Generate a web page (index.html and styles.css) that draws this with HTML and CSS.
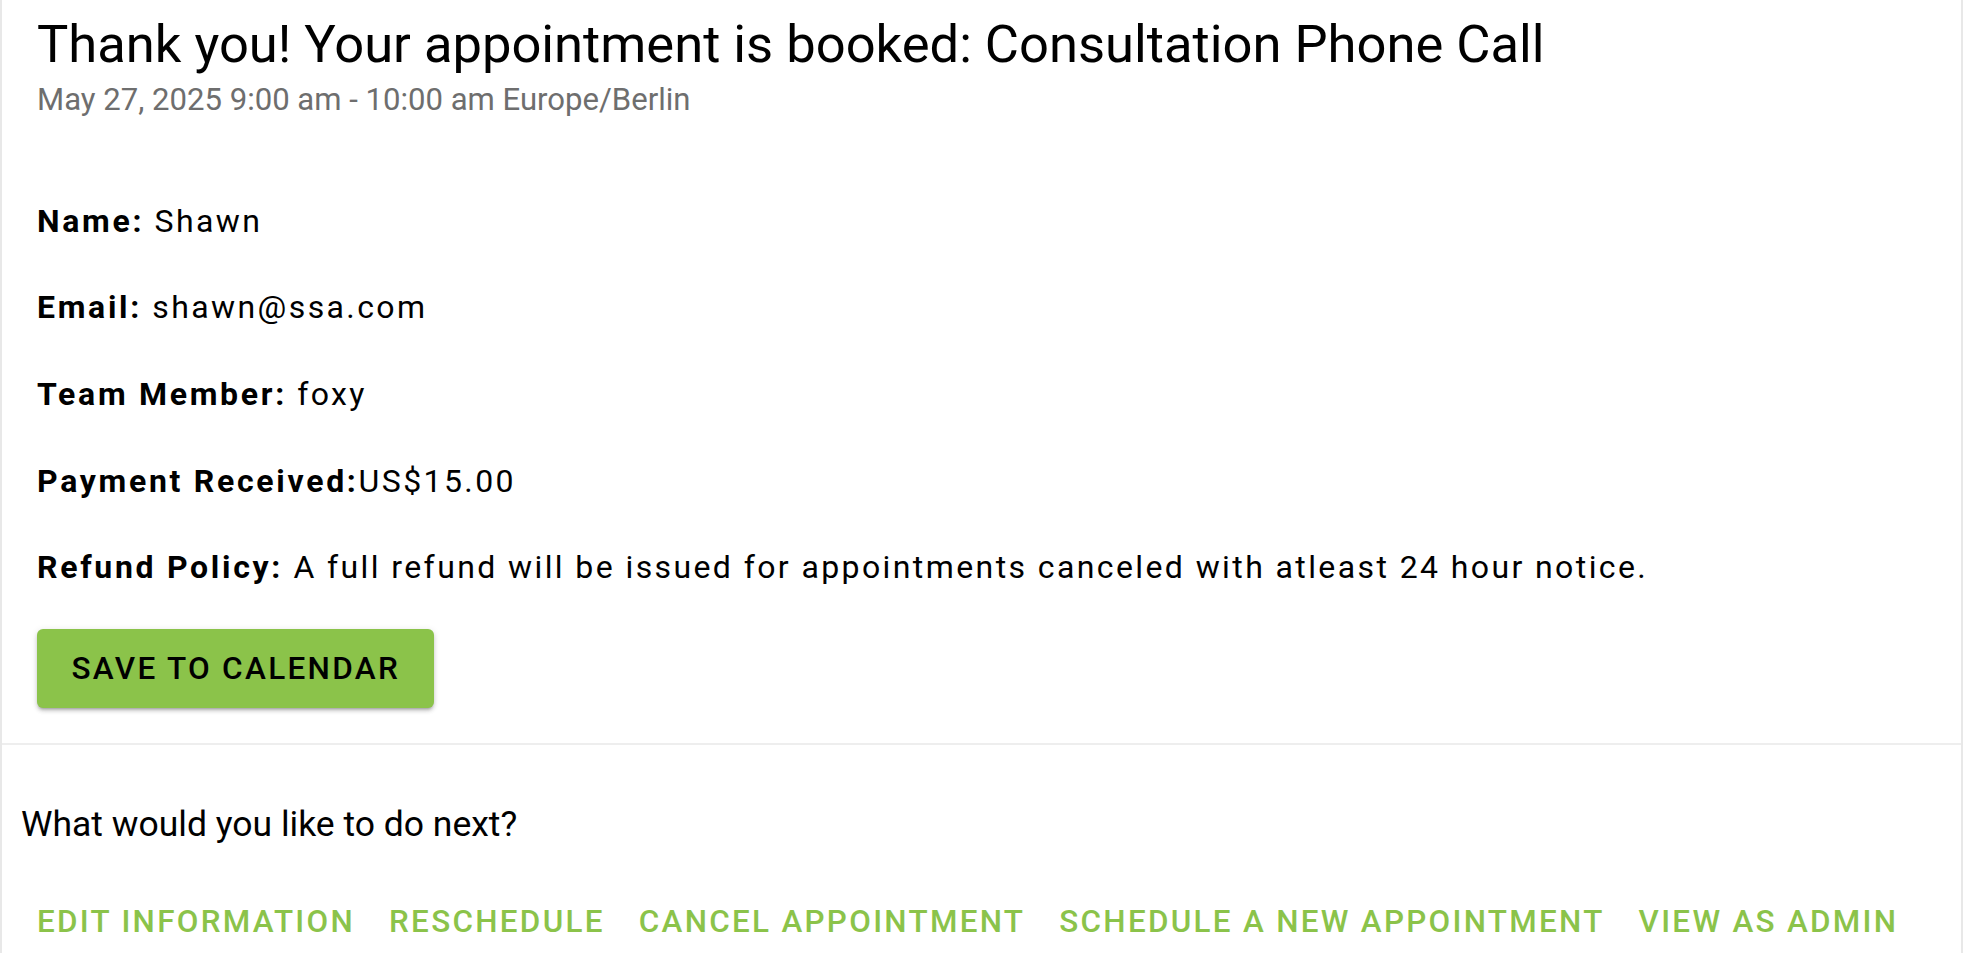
FILE: index.html
```html
<!DOCTYPE html>
<html lang="en">
<head>
<meta charset="utf-8">
<title>Appointment booked</title>
<link rel="stylesheet" href="styles.css">
</head>
<body>
<div class="card">
  <section class="booked">
    <h1 class="title">Thank you! Your appointment is booked: Consultation Phone Call</h1>
    <div class="when">May 27, 2025 9:00 am - 10:00 am Europe/Berlin</div>
    <div class="details">
      <p class="row"><b>Name:</b> Shawn</p>
      <p class="row"><b>Email:</b> shawn@ssa.com</p>
      <p class="row"><b>Team Member:</b> foxy</p>
      <p class="row"><b>Payment Received:</b>US$15.00</p>
      <p class="row"><b>Refund Policy:</b> A full refund will be issued for appointments canceled with atleast 24 hour notice.</p>
    </div>
    <div class="actions">
      <button class="save-btn" type="button">Save to calendar</button>
    </div>
  </section>
  <section class="next">
    <p class="question">What would you like to do next?</p>
    <nav class="links">
      <a class="link" href="#">Edit information</a>
      <a class="link" href="#">Reschedule</a>
      <a class="link" href="#">Cancel appointment</a>
      <a class="link" href="#">Schedule a new appointment</a>
      <a class="link" href="#">View as admin</a>
    </nav>
  </section>
</div>
</body>
</html>
```

FILE: styles.css
```css
html, body {
  margin: 0;
  padding: 0;
  background: #ffffff;
}

body {
  font-family: Roboto, "Liberation Sans", Arial, sans-serif;
  color: #000000;
}

.card {
  border-left: 2px solid #e8e8e8;
  border-right: 2px solid #e8e8e8;
  background: #ffffff;
}

.booked {
  padding: 12px 0 34.7px 35px;
  border-bottom: 2px solid #eeeeee;
}

.title {
  margin: 0;
  font-size: 52.5px;
  line-height: 64px;
  font-weight: 400;
  letter-spacing: 0;
}

.when {
  margin-top: 4px;
  font-size: 31.1px;
  line-height: 40px;
  color: #6e6e6e;
}

.details {
  margin-top: 76.7px;
  display: flex;
  flex-direction: column;
  gap: 38.7px;
}

.row {
  margin: 0;
  font-size: 32px;
  line-height: 48px;
  letter-spacing: 2.4px;
}

.row b {
  font-weight: 700;
  letter-spacing: 2.7px;
}

.actions {
  margin-top: 37.8px;
}

.save-btn {
  display: inline-flex;
  align-items: center;
  height: 79px;
  padding: 0 33.5px 0 34.5px;
  border: 0;
  border-radius: 6px;
  background: #8bc34a;
  color: #000000;
  font-family: Roboto, "Liberation Sans", Arial, sans-serif;
  font-size: 31.5px;
  font-weight: 500;
  letter-spacing: 2.3px;
  text-transform: uppercase;
  box-shadow: 0 3px 3px -2px rgba(0, 0, 0, 0.25), 0 3px 4px 0 rgba(0, 0, 0, 0.14), 0 1px 7px 0 rgba(0, 0, 0, 0.1);
  cursor: pointer;
}

.next {
  padding: 55px 0 10.5px 19px;
}

.question {
  margin: 0;
  font-size: 35.5px;
  line-height: 48px;
}

.links {
  margin-top: 54.5px;
  padding-left: 16px;
  display: flex;
  gap: 34px;
}

.link {
  font-size: 31.4px;
  line-height: 40px;
  font-weight: 500;
  letter-spacing: 2.3px;
  text-transform: uppercase;
  text-decoration: none;
  color: #8bc34a;
}
```
